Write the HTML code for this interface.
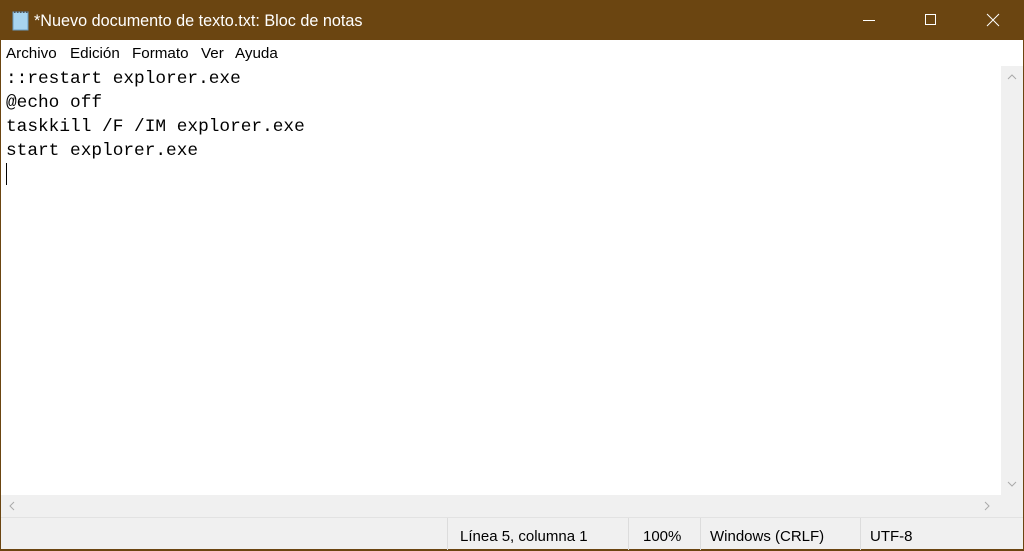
<!DOCTYPE html>
<html><head><meta charset="utf-8"><style>
*{margin:0;padding:0;box-sizing:border-box}
body{width:1024px;height:551px;overflow:hidden;background:#6b4511;font-family:"Liberation Sans",sans-serif;position:relative}
#title{position:absolute;left:0;top:0;width:1024px;height:40px;color:#fff;font-size:16.2px}
#title .t{position:absolute;left:34px;top:12px}
#menu{position:absolute;left:1px;top:40px;width:1022px;height:26px;background:#fff;font-size:15.2px;color:#000}
#menu span{position:absolute;top:5px}
#edit{position:absolute;left:1px;top:66px;width:1000px;height:429px;background:#fff;font-family:"Liberation Mono",monospace;font-size:17.8px;line-height:24px;padding:1px 0 0 5px;color:#000;white-space:pre}
#vs{position:absolute;left:1001px;top:66px;width:22px;height:429px;background:#f0f0f0}
#hs{position:absolute;left:1px;top:495px;width:1022px;height:22px;background:#f0f0f0}
#sb{position:absolute;left:1px;top:517px;width:1022px;height:32px;background:#f0f0f0;border-top:1px solid #e2e2e2;font-size:15px;color:#000}
#sb span{position:absolute;top:10px}
.sep{position:absolute;top:0;width:1px;height:32px;background:#dcdcdc}
</style></head><body>
<div id="title">
<svg style="position:absolute;left:11px;top:9px" width="20" height="22" viewBox="0 0 20 22"><rect x="2" y="3" width="15" height="18" fill="#a8d4ef" stroke="#6a9cc0"/><path d="M3 3h14" stroke="#555" stroke-width="2" stroke-dasharray="1.5 1.5"/></svg>
<span class="t">*Nuevo documento de texto.txt: Bloc de notas</span>
<svg style="position:absolute;left:862px;top:13px" width="14" height="14"><path d="M1 7.5h12" stroke="#fff"/></svg>
<svg style="position:absolute;left:924px;top:13px" width="14" height="14"><rect x="1.5" y="1.5" width="10" height="10" fill="none" stroke="#fff"/></svg>
<svg style="position:absolute;left:986px;top:13px" width="14" height="14"><path d="M1 1l12 12M13 1L1 13" stroke="#fff"/></svg>
</div>
<div id="menu"><span style="left:5px">Archivo</span><span style="left:69px">Edición</span><span style="left:131px">Formato</span><span style="left:200px">Ver</span><span style="left:234px">Ayuda</span></div>
<div id="edit">::restart explorer.exe
@echo off
taskkill /F /IM explorer.exe
start explorer.exe
<span style="display:inline-block;width:1px;height:22px;background:#000;vertical-align:middle"></span></div>
<div id="vs"><svg style="position:absolute;left:6px;top:7px" width="10" height="8"><path d="M1 6l4-4 4 4" stroke="#aaa" fill="none"/></svg><svg style="position:absolute;left:6px;top:414px" width="10" height="8"><path d="M1 2l4 4 4-4" stroke="#aaa" fill="none"/></svg></div>
<div id="hs"><svg style="position:absolute;left:7px;top:6px" width="8" height="10"><path d="M6 1L2 5l4 4" stroke="#aaa" fill="none"/></svg><svg style="position:absolute;left:982px;top:6px" width="8" height="10"><path d="M2 1l4 4-4 4" stroke="#aaa" fill="none"/></svg></div>
<div id="sb">
<div class="sep" style="left:446px"></div><div class="sep" style="left:627px"></div><div class="sep" style="left:699px"></div><div class="sep" style="left:859px"></div>
<span style="left:459px">Línea 5, columna 1</span><span style="left:642px">100%</span><span style="left:709px">Windows (CRLF)</span><span style="left:869px">UTF-8</span>
</div>
</body></html>
